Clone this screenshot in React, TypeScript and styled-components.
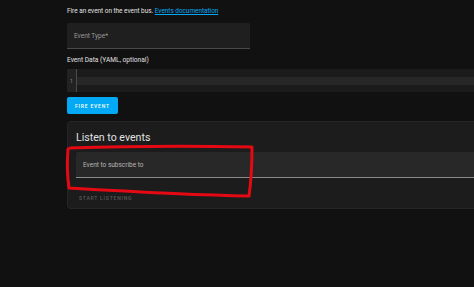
import * as React from "react";
import styled, { createGlobalStyle } from "styled-components";

const Global = createGlobalStyle`
  html, body {
    margin: 0;
    padding: 0;
    background: #111111;
  }
  body {
    font-family: Roboto, "Noto Sans", sans-serif;
    color: #e1e1e1;
  }
`;

const Page = styled.div`
  position: relative;
  width: 474px;
  height: 287px;
  overflow: hidden;
  background: #111111;
`;

const Content = styled.div`
  display: flex;
  flex-direction: column;
  align-items: flex-start;
  padding: 7px 0 0 67px;
`;

const Intro = styled.div`
  font-size: 6.4px;
  line-height: 8px;
  color: #e1e1e1;
  margin-bottom: 8px;
  a {
    color: #03a9f4;
    text-decoration: underline;
  }
`;

const Field = styled.div<{ $width?: number; $bg: string; $line: string; $label: string }>`
  box-sizing: border-box;
  width: ${(p) => (p.$width ? `${p.$width}px` : "600px")};
  height: 26px;
  display: flex;
  align-items: center;
  padding-left: 7px;
  background: ${(p) => p.$bg};
  border-bottom: 1px solid ${(p) => p.$line};
  border-radius: 2px 2px 0 0;
  font-size: 6.5px;
  color: ${(p) => p.$label};
  flex-shrink: 0;
`;

const DataLabel = styled.div`
  margin-top: 7px;
  font-size: 6.6px;
  line-height: 8px;
  color: #e1e1e1;
`;

const Editor = styled.div`
  margin-top: 5px;
  width: 600px;
  height: 23px;
  display: flex;
  background: #1b1b1b;
  flex-shrink: 0;
  margin-bottom: 5px;
`;

const Gutter = styled.div`
  width: 9px;
  display: flex;
  align-items: center;
  justify-content: center;
  background: #222222;
  border-right: 1px solid #4a4a4a;
  font-size: 5px;
  color: #8a8a8a;
`;

const Lines = styled.div`
  flex: 1;
  display: flex;
  align-items: center;
`;

const ActiveLine = styled.div`
  width: 100%;
  height: 8px;
  background: #272727;
`;

const Button = styled.button<{ $primary?: boolean }>`
  border: none;
  font-family: Roboto, "Noto Sans", sans-serif;
  font-weight: 500;
  font-size: 5px;
  letter-spacing: 0.8px;
  text-transform: uppercase;
  border-radius: 2px;
  cursor: pointer;
  background: ${(p) => (p.$primary ? "#03a9f4" : "transparent")};
  color: ${(p) => (p.$primary ? "#ffffff" : "#5a5a5a")};
  height: ${(p) => (p.$primary ? "17px" : "16px")};
  padding: 0 ${(p) => (p.$primary ? "8px" : "3px")};
`;

const Card = styled.div`
  margin-top: 7px;
  box-sizing: border-box;
  width: 600px;
  height: 88px;
  background: #1c1c1c;
  border: 1px solid #262626;
  border-radius: 4px;
  padding: 7px 8px 0 8px;
  display: flex;
  flex-direction: column;
  align-items: flex-start;
`;

const CardTitle = styled.div`
  font-size: 10.6px;
  line-height: 18px;
  color: #e1e1e1;
  margin-bottom: 5px;
`;

const CardActions = styled.div`
  margin-top: 7px;
`;

const Scribble = styled.svg`
  position: absolute;
  left: 0;
  top: 0;
  pointer-events: none;
`;

export default function App() {
  return (
    <Page>
      <Global />
      <Content>
        <Intro>
          Fire an event on the event bus. <a href="#">Events documentation</a>
        </Intro>
        <Field $width={183} $bg="#1f1f1f" $line="#4a4a4a" $label="#9a9a9a">
          Event Type*
        </Field>
        <DataLabel>Event Data (YAML, optional)</DataLabel>
        <Editor>
          <Gutter>1</Gutter>
          <Lines>
            <ActiveLine />
          </Lines>
        </Editor>
        <Button $primary>Fire Event</Button>
        <Card>
          <CardTitle>Listen to events</CardTitle>
          <Field $bg="#282828" $line="#8a8a8a" $label="#b5b5b5">
            Event to subscribe to
          </Field>
          <CardActions>
            <Button>Start Listening</Button>
          </CardActions>
        </Card>
      </Content>
      <Scribble width="474" height="287" viewBox="0 0 474 287">
        <path
          d="M70 148 C130 146 200 146 252 147 C252 165 251 182 249 196 C190 195 120 191 69 188 C67 175 67 162 68 149"
          fill="none"
          stroke="#e50914"
          strokeWidth="3"
          strokeLinejoin="round"
          strokeLinecap="round"
        />
      </Scribble>
    </Page>
  );
}
